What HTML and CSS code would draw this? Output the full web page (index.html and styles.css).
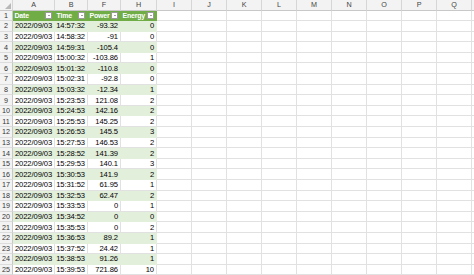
FILE: index.html
```html
<!DOCTYPE html>
<html>
<head>
<meta charset="utf-8">
<link rel="stylesheet" href="styles.css">
</head>
<body>
<div class="sheet">
  <div class="row colhead">
    <span class="corner"><b class="tri"></b></span><span>A</span><span>B</span><span>F</span><span>H</span><span>I</span><span>J</span><span>K</span><span>L</span><span>M</span><span>N</span><span>O</span><span>P</span><span>Q</span><span></span>
  </div>
  <div class="row thead">
    <span class="rh">1</span>
    <span class="th">Date<b class="flt"></b></span><span class="th">Time<b class="flt"></b></span><span class="th">Power<b class="flt"></b></span><span class="th">Energy<b class="flt"></b></span>
    <span></span><span></span><span></span><span></span><span></span><span></span><span></span><span></span><span></span><span></span>
  </div>
  <div class="row band"><span class="rh">2</span><span class="t">2022/09/03</span><span class="n">14:57:32</span><span class="n">-93.32</span><span class="n">0</span><span></span><span></span><span></span><span></span><span></span><span></span><span></span><span></span><span></span><span></span></div>
  <div class="row"><span class="rh">3</span><span class="t">2022/09/03</span><span class="n">14:58:32</span><span class="n">-91</span><span class="n">0</span><span></span><span></span><span></span><span></span><span></span><span></span><span></span><span></span><span></span><span></span></div>
  <div class="row band"><span class="rh">4</span><span class="t">2022/09/03</span><span class="n">14:59:31</span><span class="n">-105.4</span><span class="n">0</span><span></span><span></span><span></span><span></span><span></span><span></span><span></span><span></span><span></span><span></span></div>
  <div class="row"><span class="rh">5</span><span class="t">2022/09/03</span><span class="n">15:00:32</span><span class="n">-103.86</span><span class="n">1</span><span></span><span></span><span></span><span></span><span></span><span></span><span></span><span></span><span></span><span></span></div>
  <div class="row band"><span class="rh">6</span><span class="t">2022/09/03</span><span class="n">15:01:32</span><span class="n">-110.8</span><span class="n">0</span><span></span><span></span><span></span><span></span><span></span><span></span><span></span><span></span><span></span><span></span></div>
  <div class="row"><span class="rh">7</span><span class="t">2022/09/03</span><span class="n">15:02:31</span><span class="n">-92.8</span><span class="n">0</span><span></span><span></span><span></span><span></span><span></span><span></span><span></span><span></span><span></span><span></span></div>
  <div class="row band"><span class="rh">8</span><span class="t">2022/09/03</span><span class="n">15:03:32</span><span class="n">-12.34</span><span class="n">1</span><span></span><span></span><span></span><span></span><span></span><span></span><span></span><span></span><span></span><span></span></div>
  <div class="row"><span class="rh">9</span><span class="t">2022/09/03</span><span class="n">15:23:53</span><span class="n">121.08</span><span class="n">2</span><span></span><span></span><span></span><span></span><span></span><span></span><span></span><span></span><span></span><span></span></div>
  <div class="row band"><span class="rh">10</span><span class="t">2022/09/03</span><span class="n">15:24:53</span><span class="n">142.16</span><span class="n">2</span><span></span><span></span><span></span><span></span><span></span><span></span><span></span><span></span><span></span><span></span></div>
  <div class="row"><span class="rh">11</span><span class="t">2022/09/03</span><span class="n">15:25:53</span><span class="n">145.25</span><span class="n">2</span><span></span><span></span><span></span><span></span><span></span><span></span><span></span><span></span><span></span><span></span></div>
  <div class="row band"><span class="rh">12</span><span class="t">2022/09/03</span><span class="n">15:26:53</span><span class="n">145.5</span><span class="n">3</span><span></span><span></span><span></span><span></span><span></span><span></span><span></span><span></span><span></span><span></span></div>
  <div class="row"><span class="rh">13</span><span class="t">2022/09/03</span><span class="n">15:27:53</span><span class="n">146.53</span><span class="n">2</span><span></span><span></span><span></span><span></span><span></span><span></span><span></span><span></span><span></span><span></span></div>
  <div class="row band"><span class="rh">14</span><span class="t">2022/09/03</span><span class="n">15:28:52</span><span class="n">141.39</span><span class="n">2</span><span></span><span></span><span></span><span></span><span></span><span></span><span></span><span></span><span></span><span></span></div>
  <div class="row"><span class="rh">15</span><span class="t">2022/09/03</span><span class="n">15:29:53</span><span class="n">140.1</span><span class="n">3</span><span></span><span></span><span></span><span></span><span></span><span></span><span></span><span></span><span></span><span></span></div>
  <div class="row band"><span class="rh">16</span><span class="t">2022/09/03</span><span class="n">15:30:53</span><span class="n">141.9</span><span class="n">2</span><span></span><span></span><span></span><span></span><span></span><span></span><span></span><span></span><span></span><span></span></div>
  <div class="row"><span class="rh">17</span><span class="t">2022/09/03</span><span class="n">15:31:52</span><span class="n">61.95</span><span class="n">1</span><span></span><span></span><span></span><span></span><span></span><span></span><span></span><span></span><span></span><span></span></div>
  <div class="row band"><span class="rh">18</span><span class="t">2022/09/03</span><span class="n">15:32:53</span><span class="n">62.47</span><span class="n">2</span><span></span><span></span><span></span><span></span><span></span><span></span><span></span><span></span><span></span><span></span></div>
  <div class="row"><span class="rh">19</span><span class="t">2022/09/03</span><span class="n">15:33:53</span><span class="n">0</span><span class="n">1</span><span></span><span></span><span></span><span></span><span></span><span></span><span></span><span></span><span></span><span></span></div>
  <div class="row band"><span class="rh">20</span><span class="t">2022/09/03</span><span class="n">15:34:52</span><span class="n">0</span><span class="n">0</span><span></span><span></span><span></span><span></span><span></span><span></span><span></span><span></span><span></span><span></span></div>
  <div class="row"><span class="rh">21</span><span class="t">2022/09/03</span><span class="n">15:35:53</span><span class="n">0</span><span class="n">2</span><span></span><span></span><span></span><span></span><span></span><span></span><span></span><span></span><span></span><span></span></div>
  <div class="row band"><span class="rh">22</span><span class="t">2022/09/03</span><span class="n">15:36:53</span><span class="n">89.2</span><span class="n">1</span><span></span><span></span><span></span><span></span><span></span><span></span><span></span><span></span><span></span><span></span></div>
  <div class="row"><span class="rh">23</span><span class="t">2022/09/03</span><span class="n">15:37:52</span><span class="n">24.42</span><span class="n">1</span><span></span><span></span><span></span><span></span><span></span><span></span><span></span><span></span><span></span><span></span></div>
  <div class="row band"><span class="rh">24</span><span class="t">2022/09/03</span><span class="n">15:38:53</span><span class="n">91.26</span><span class="n">1</span><span></span><span></span><span></span><span></span><span></span><span></span><span></span><span></span><span></span><span></span></div>
  <div class="row"><span class="rh">25</span><span class="t">2022/09/03</span><span class="n">15:39:53</span><span class="n">721.86</span><span class="n">10</span><span></span><span></span><span></span><span></span><span></span><span></span><span></span><span></span><span></span><span></span></div>
</div>
</body>
</html>
```
FILE: styles.css
```css
html, body {
  margin: 0;
  padding: 0;
  background: #ffffff;
}
.sheet {
  width: 474px;
  height: 275px;
  overflow: hidden;
  font-family: "Liberation Sans", Arial, sans-serif;
  font-size: 7.6px;
  letter-spacing: -0.1px;
  color: #000;
}
.row {
  display: grid;
  grid-template-columns: 13px 42px 33px 33px 36px repeat(9, 35px) 2px;
  height: 10.6px;
}
.row > span {
  box-sizing: border-box;
  border-right: 1px solid #e1e1e1;
  border-bottom: 1px solid #e1e1e1;
  display: flex;
  align-items: center;
  padding: 0 2px 0 2px;
  white-space: nowrap;
  overflow: hidden;
  position: relative;
}
.colhead {
  height: 10.5px;
  background: #f3f3f3;
}
.colhead > span {
  justify-content: center;
  color: #444;
  border-right: 1px solid #d6d6d6;
  border-bottom: 1px solid #c8c8c8;
  font-size: 7.2px;
}
.corner {
  background: #f3f3f3;
}
.tri {
  position: absolute;
  right: 1px;
  bottom: 1px;
  width: 0;
  height: 0;
  border-left: 6px solid transparent;
  border-bottom: 6px solid #b8b8b8;
}
.rh {
  justify-content: center;
  background: #f3f3f3;
  color: #333;
  border-right: 1px solid #c8c8c8 !important;
  border-bottom: 1px solid #dcdcdc !important;
  padding: 0 !important;
  font-size: 7.2px;
  letter-spacing: 0;
}
.thead .th {
  background: #70ad47;
  color: #ffffff;
  font-weight: bold;
  font-size: 7px;
  letter-spacing: -0.2px;
  border-right-color: #70ad47;
  border-bottom-color: #70ad47;
  padding-left: 1.5px;
}
.flt {
  position: absolute;
  right: 2px;
  top: 1.5px;
  width: 7px;
  height: 7px;
  box-sizing: border-box;
  background: #ffffff;
  border: 1px solid #9a9a9a;
}
.flt::after {
  content: "";
  position: absolute;
  left: 1.5px;
  top: 2px;
  border-left: 1.5px solid transparent;
  border-right: 1.5px solid transparent;
  border-top: 1.8px solid #444;
}
.band > span:nth-child(-n+5):not(.rh) {
  background: #e2efda;
  border-right-color: #e2efda;
  border-bottom-color: #e2efda;
}
.t {
  justify-content: flex-start;
}
.n {
  justify-content: flex-end;
}
```
